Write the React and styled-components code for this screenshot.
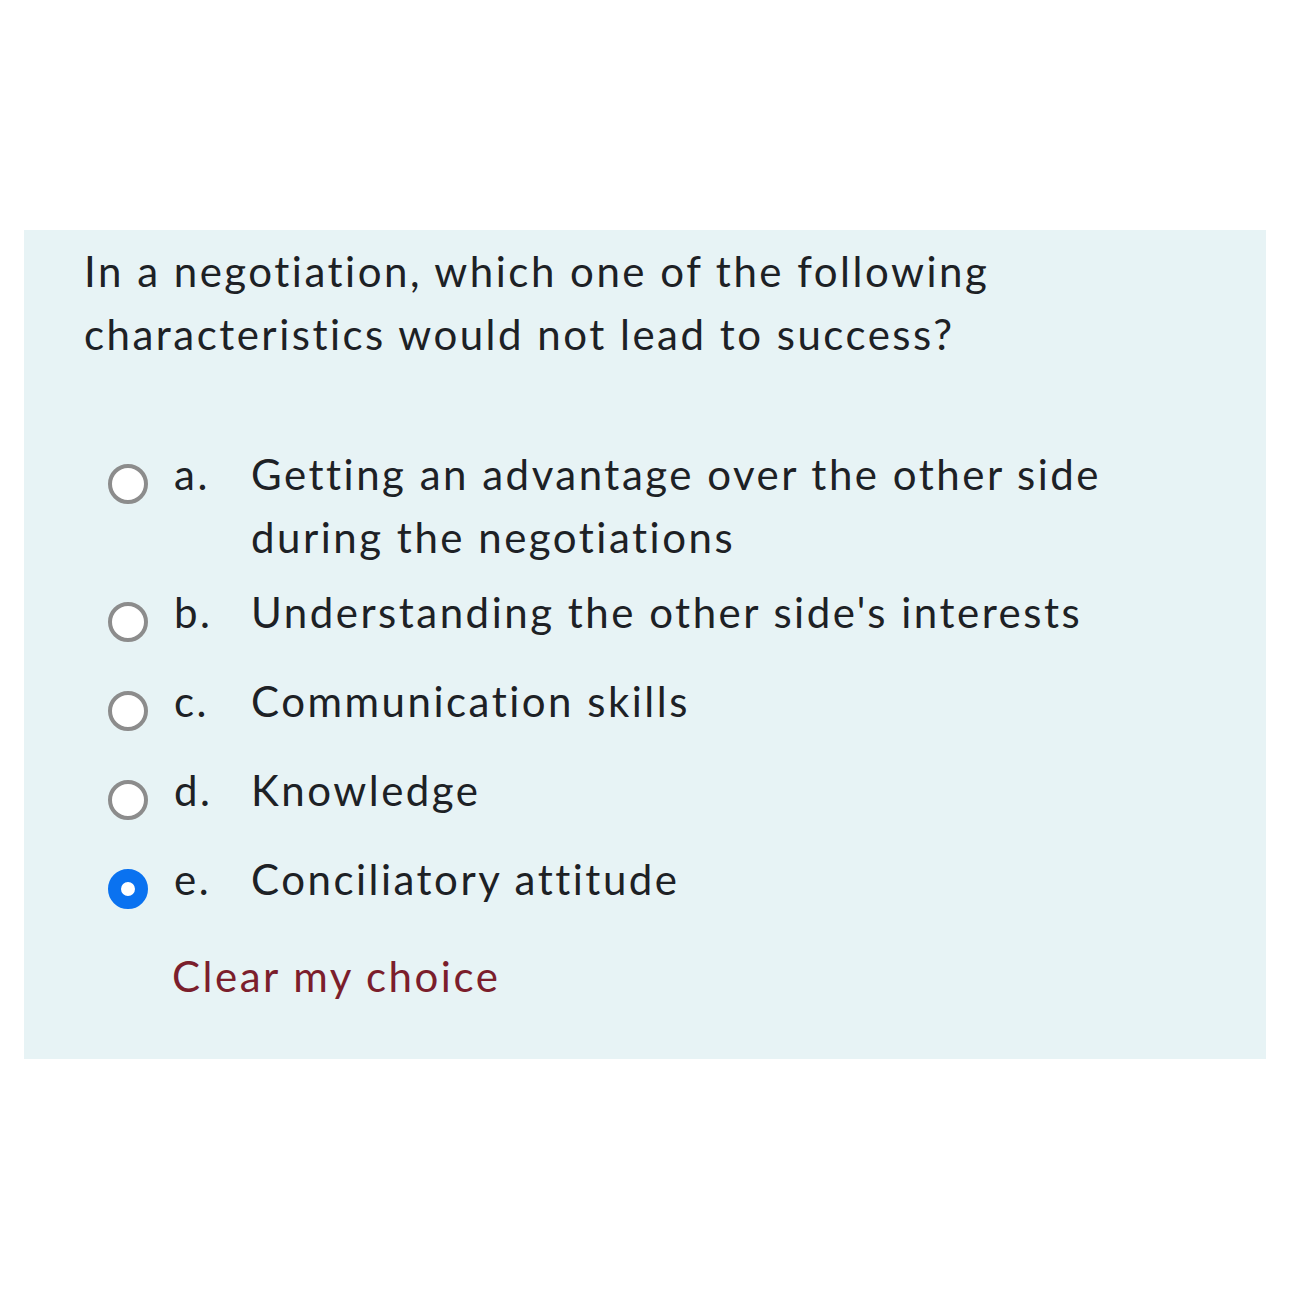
import React from "react";
import styled, { createGlobalStyle } from "styled-components";

const GlobalStyle = createGlobalStyle`
  body {
    margin: 0;
    background: #ffffff;
    font-family: "Lato", "Liberation Sans", sans-serif;
    color: #1d2125;
  }
`;

const Page = styled.div`
  padding: 230px 24px 0 24px;
`;

const QuestionCard = styled.div`
  background: #e7f3f5;
  padding: 10px 60px 51px 60px;
  font-size: 42px;
  line-height: 63px;
  letter-spacing: 2.5px;
`;

const QuestionText = styled.div`
  margin-bottom: 71px;
`;

const Options = styled.div`
  display: flex;
  flex-direction: column;
  padding-left: 24px;
`;

const OptionRow = styled.label`
  display: flex;
  align-items: flex-start;
  box-sizing: border-box;
  min-height: 89px;
  padding: 6px 0;
  cursor: pointer;
`;

const Radio = styled.span`
  flex: none;
  box-sizing: border-box;
  width: 40px;
  height: 40px;
  margin-top: 21px;
  border-radius: 50%;
  background: #ffffff;
  border: ${(p) => (p.$checked ? "13.5px solid #0a72f0" : "4px solid #8c8c8c")};
`;

const Letter = styled.span`
  flex: none;
  width: 77px;
  margin-left: 26px;
`;

const AnswerText = styled.span`
  flex: 1;
`;

const ClearLink = styled.a`
  display: block;
  margin: 14px 0 0 88px;
  color: #7b1e2c;
  text-decoration: none;
`;

const options = [
  { key: "a", text: "Getting an advantage over the other side during the negotiations" },
  { key: "b", text: "Understanding the other side's interests" },
  { key: "c", text: "Communication skills" },
  { key: "d", text: "Knowledge" },
  { key: "e", text: "Conciliatory attitude" },
];

export default function App() {
  const selected = "e";
  return (
    <Page>
      <GlobalStyle />
      <QuestionCard>
        <QuestionText>
          In a negotiation, which one of the following characteristics would not lead to success?
        </QuestionText>
        <Options>
          {options.map((o) => (
            <OptionRow key={o.key}>
              <Radio $checked={o.key === selected} />
              <Letter>{o.key}.</Letter>
              <AnswerText>{o.text}</AnswerText>
            </OptionRow>
          ))}
        </Options>
        <ClearLink href="#">Clear my choice</ClearLink>
      </QuestionCard>
    </Page>
  );
}
